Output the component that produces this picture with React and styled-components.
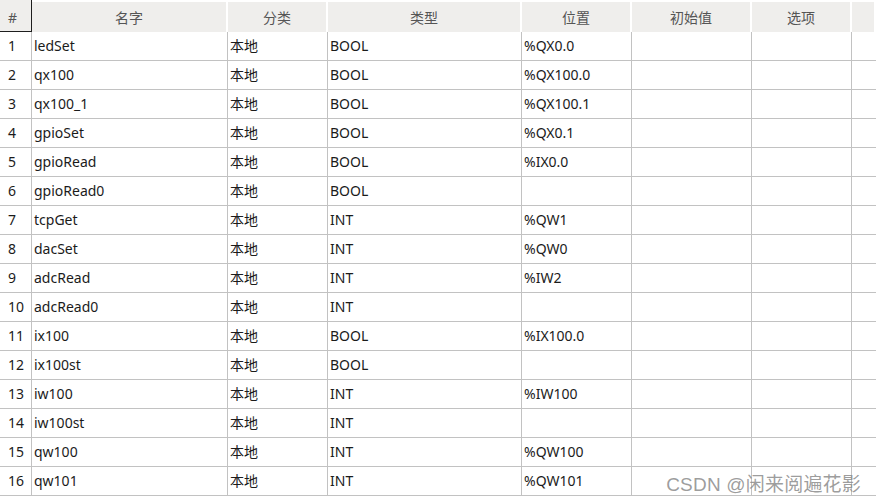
import styled, { createGlobalStyle } from 'styled-components';

const GlobalStyle = createGlobalStyle`
  html, body {
    margin: 0;
    padding: 0;
    background: #ffffff;
  }
  body {
    font-family: "Noto Sans", "Noto Sans CJK SC", sans-serif;
    overflow: hidden;
  }
`;

const COLS = '32px 196px 100px 194px 110px 120px 100px 1fr';

const Page = styled.div`
  position: relative;
  width: 876px;
  height: 503px;
  padding-top: 2px;
  box-sizing: border-box;
  overflow: hidden;
`;

const HeaderRow = styled.div`
  display: grid;
  grid-template-columns: ${COLS};
  height: 29px;
`;

const HeaderCell = styled.div`
  display: flex;
  align-items: center;
  justify-content: center;
  margin-right: 2px;
  background: #efeeec;
  color: #555555;
  font-size: 14px;
  font-family: "Noto Sans", "Noto Sans CJK SC", sans-serif;
  box-sizing: border-box;
  ${(p) => p.$focus && `
    margin-right: 0;
    justify-content: flex-start;
    padding-left: 8px;
    padding-top: 3px;
    border-right: 1px solid #1e1e1e;
    border-bottom: 1px solid #1e1e1e;
    margin-top: -2px;
    height: 32px;
  `}
`;

const Body = styled.div`
  margin-top: 1px;
`;

const Row = styled.div`
  display: grid;
  grid-template-columns: ${COLS};
  height: 29px;
  border-bottom: 1px solid #c2c2c2;
  box-sizing: border-box;
`;

const Cell = styled.div`
  display: flex;
  align-items: center;
  padding-left: ${(p) => (p.$num ? '8px' : '2px')};
  padding-bottom: 2px;
  border-right: 1px solid #c2c2c2;
  color: #1b1b1b;
  font-size: 14px;
  white-space: nowrap;
  overflow: hidden;
  box-sizing: border-box;
  &:last-child {
    border-right: none;
  }
`;

const Watermark = styled.div`
  position: absolute;
  right: 15px;
  bottom: 7px;
  font-family: "Liberation Sans", "Noto Sans CJK SC", sans-serif;
  font-size: 19px;
  color: rgba(140, 140, 140, 0.85);
  letter-spacing: 0.2px;
`;

const headers = ['名字', '分类', '类型', '位置', '初始值', '选项', ''];

const rows = [
  ['ledSet', '本地', 'BOOL', '%QX0.0'],
  ['qx100', '本地', 'BOOL', '%QX100.0'],
  ['qx100_1', '本地', 'BOOL', '%QX100.1'],
  ['gpioSet', '本地', 'BOOL', '%QX0.1'],
  ['gpioRead', '本地', 'BOOL', '%IX0.0'],
  ['gpioRead0', '本地', 'BOOL', ''],
  ['tcpGet', '本地', 'INT', '%QW1'],
  ['dacSet', '本地', 'INT', '%QW0'],
  ['adcRead', '本地', 'INT', '%IW2'],
  ['adcRead0', '本地', 'INT', ''],
  ['ix100', '本地', 'BOOL', '%IX100.0'],
  ['ix100st', '本地', 'BOOL', ''],
  ['iw100', '本地', 'INT', '%IW100'],
  ['iw100st', '本地', 'INT', ''],
  ['qw100', '本地', 'INT', '%QW100'],
  ['qw101', '本地', 'INT', '%QW101'],
];

export default function App() {
  return (
    <Page>
      <GlobalStyle />
      <HeaderRow>
        <HeaderCell $focus>#</HeaderCell>
        {headers.map((h, i) => (
          <HeaderCell key={i}>{h}</HeaderCell>
        ))}
      </HeaderRow>
      <Body>
        {rows.map((r, i) => (
          <Row key={i}>
            <Cell $num>{i + 1}</Cell>
            <Cell>{r[0]}</Cell>
            <Cell>{r[1]}</Cell>
            <Cell>{r[2]}</Cell>
            <Cell>{r[3]}</Cell>
            <Cell />
            <Cell />
            <Cell />
          </Row>
        ))}
      </Body>
      <Watermark>CSDN @闲来阅遍花影</Watermark>
    </Page>
  );
}
